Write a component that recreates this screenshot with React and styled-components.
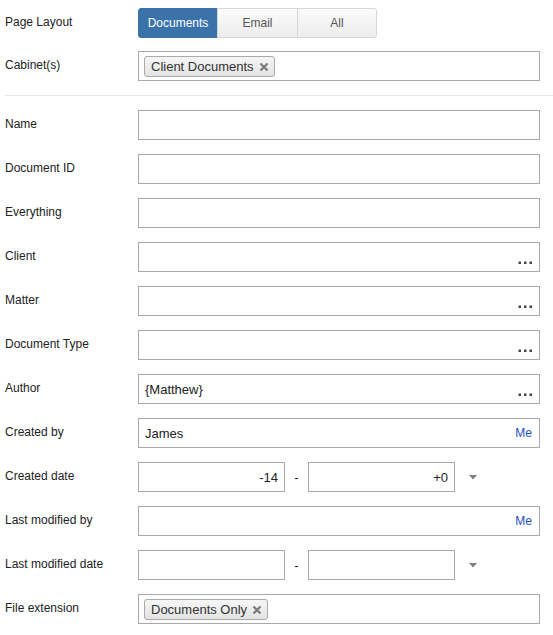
import styled, { createGlobalStyle } from 'styled-components';

const GlobalStyle = createGlobalStyle`
  html, body {
    margin: 0;
    padding: 0;
    background: #ffffff;
  }
  body {
    font-family: "Liberation Sans", Arial, sans-serif;
    color: #333333;
  }
  * {
    box-sizing: border-box;
  }
`;

// 페이지 레이아웃 버튼 목록
const layouts = [
  { name: 'Documents', width: 80 },
  { name: 'Email', width: 81 },
  { name: 'All', width: 80 },
];

export default function App() {
  return (
    <>
      <GlobalStyle />
      <StPage>
        <StGroup $gap={13}>
          <StRow>
            <StLabel>Page Layout</StLabel>
            <StButtonGroup>
              {layouts.map((item, i) => (
                <StLayoutButton key={item.name} $active={i === 0} $width={item.width}>
                  {item.name}
                </StLayoutButton>
              ))}
            </StButtonGroup>
          </StRow>
          <StRow>
            <StLabel>Cabinet(s)</StLabel>
            <StField $tags>
              <Tag>Client Documents</Tag>
            </StField>
          </StRow>
        </StGroup>

        <StDivider />

        <StGroup $gap={14}>
          <StRow>
            <StLabel>Name</StLabel>
            <StField />
          </StRow>
          <StRow>
            <StLabel>Document ID</StLabel>
            <StField />
          </StRow>
          <StRow>
            <StLabel>Everything</StLabel>
            <StField />
          </StRow>
          <StRow>
            <StLabel>Client</StLabel>
            <StField>
              <Ellipsis />
            </StField>
          </StRow>
          <StRow>
            <StLabel>Matter</StLabel>
            <StField>
              <Ellipsis />
            </StField>
          </StRow>
          <StRow>
            <StLabel>Document Type</StLabel>
            <StField>
              <Ellipsis />
            </StField>
          </StRow>
          <StRow>
            <StLabel>Author</StLabel>
            <StField>
              <StValue>{'{Matthew}'}</StValue>
              <Ellipsis />
            </StField>
          </StRow>
          <StRow>
            <StLabel>Created by</StLabel>
            <StField>
              <StValue>James</StValue>
              <StMeLink>Me</StMeLink>
            </StField>
          </StRow>
          <StRow>
            <StLabel>Created date</StLabel>
            <DateRange from="-14" to="+0" />
          </StRow>
          <StRow>
            <StLabel>Last modified by</StLabel>
            <StField>
              <StValue />
              <StMeLink>Me</StMeLink>
            </StField>
          </StRow>
          <StRow>
            <StLabel>Last modified date</StLabel>
            <DateRange from="" to="" />
          </StRow>
          <StRow>
            <StLabel>File extension</StLabel>
            <StField $tags>
              <Tag>Documents Only</Tag>
            </StField>
          </StRow>
        </StGroup>
      </StPage>
    </>
  );
}

function Tag({ children }) {
  return (
    <StTag>
      {children}
      <StTagRemove>
        <svg width="10" height="10" viewBox="0 0 10 10">
          <path d="M1.5 1.5 L8.5 8.5 M8.5 1.5 L1.5 8.5" stroke="#7a7a7a" strokeWidth="2.2" />
        </svg>
      </StTagRemove>
    </StTag>
  );
}

function Ellipsis() {
  return (
    <StEllipsis>
      <svg width="14" height="3" viewBox="0 0 14 3">
        <rect x="0.5" y="0.5" width="2.5" height="2.5" fill="#444" />
        <rect x="6" y="0.5" width="2.5" height="2.5" fill="#444" />
        <rect x="11.5" y="0.5" width="2.5" height="2.5" fill="#444" />
      </svg>
    </StEllipsis>
  );
}

function DateRange({ from, to }) {
  return (
    <StDateRange>
      <StDateBox>{from}</StDateBox>
      <StDash>-</StDash>
      <StDateBox>{to}</StDateBox>
      <StCaret>
        <svg width="8" height="5" viewBox="0 0 8 5">
          <path d="M0 0 L8 0 L4 4.5 Z" fill="#808080" />
        </svg>
      </StCaret>
    </StDateRange>
  );
}

const StPage = styled.div`
  width: 553px;
  padding: 8px 3px 10px 5px;
`;

const StGroup = styled.div`
  display: flex;
  flex-direction: column;
  gap: ${(p) => p.$gap}px;
`;

const StRow = styled.div`
  display: grid;
  grid-template-columns: 133px 402px;
  align-items: center;
  height: 30px;
`;

const StLabel = styled.div`
  font-size: 12px;
  color: #222222;
  line-height: 14px;
  margin-top: -2px;
`;

const StButtonGroup = styled.div`
  display: flex;
  height: 30px;
`;

const StLayoutButton = styled.div`
  width: ${(p) => p.$width}px;
  height: 30px;
  display: flex;
  align-items: center;
  justify-content: center;
  font-size: 12px;
  color: ${(p) => (p.$active ? '#ffffff' : '#555555')};
  background: ${(p) =>
    p.$active ? '#3a73aa' : 'linear-gradient(#fbfbfb, #ececec)'};
  border: 1px solid ${(p) => (p.$active ? '#3a73aa' : '#d6d6d6')};
  margin-left: -1px;
  cursor: pointer;

  &:first-child {
    margin-left: 0;
    border-radius: 3px 0 0 3px;
  }
  &:last-child {
    border-radius: 0 3px 3px 0;
  }
`;

const StField = styled.div`
  height: 30px;
  border: 1px solid #a9a9a9;
  display: flex;
  align-items: center;
  padding: ${(p) => (p.$tags ? '0 5px' : '0 7px 0 6px')};
  font-size: 13px;
  color: #222222;
`;

const StValue = styled.div`
  flex: 1;
  font-size: 13px;
  color: #222222;
`;

const StMeLink = styled.a`
  font-size: 12px;
  color: #2450c0;
  cursor: pointer;
`;

const StEllipsis = styled.div`
  margin-left: auto;
  align-self: flex-end;
  margin-bottom: 7px;
  line-height: 0;
`;

const StTag = styled.div`
  display: inline-flex;
  align-items: center;
  height: 21px;
  padding: 0 5px 0 6px;
  gap: 5px;
  font-size: 13px;
  color: #333333;
  background: linear-gradient(#f6f6f6, #e3e3e3);
  border: 1px solid #aaaaaa;
  border-radius: 3px;
`;

const StTagRemove = styled.span`
  display: inline-flex;
  line-height: 0;
  margin-top: 1px;
  cursor: pointer;
`;

const StDivider = styled.hr`
  border: none;
  border-top: 1px solid #e6e6e6;
  margin: 14px -3px 14px 0;
  height: 0;
`;

const StDateRange = styled.div`
  display: flex;
  align-items: center;
  height: 30px;
`;

const StDateBox = styled.div`
  width: 147px;
  height: 30px;
  border: 1px solid #a9a9a9;
  display: flex;
  align-items: center;
  justify-content: flex-end;
  padding: 0 6px;
  font-size: 13px;
  color: #222222;
`;

const StDash = styled.div`
  width: 23px;
  text-align: center;
  font-size: 13px;
  color: #222222;
`;

const StCaret = styled.div`
  margin-left: 14px;
  line-height: 0;
  margin-top: 1px;
`;
